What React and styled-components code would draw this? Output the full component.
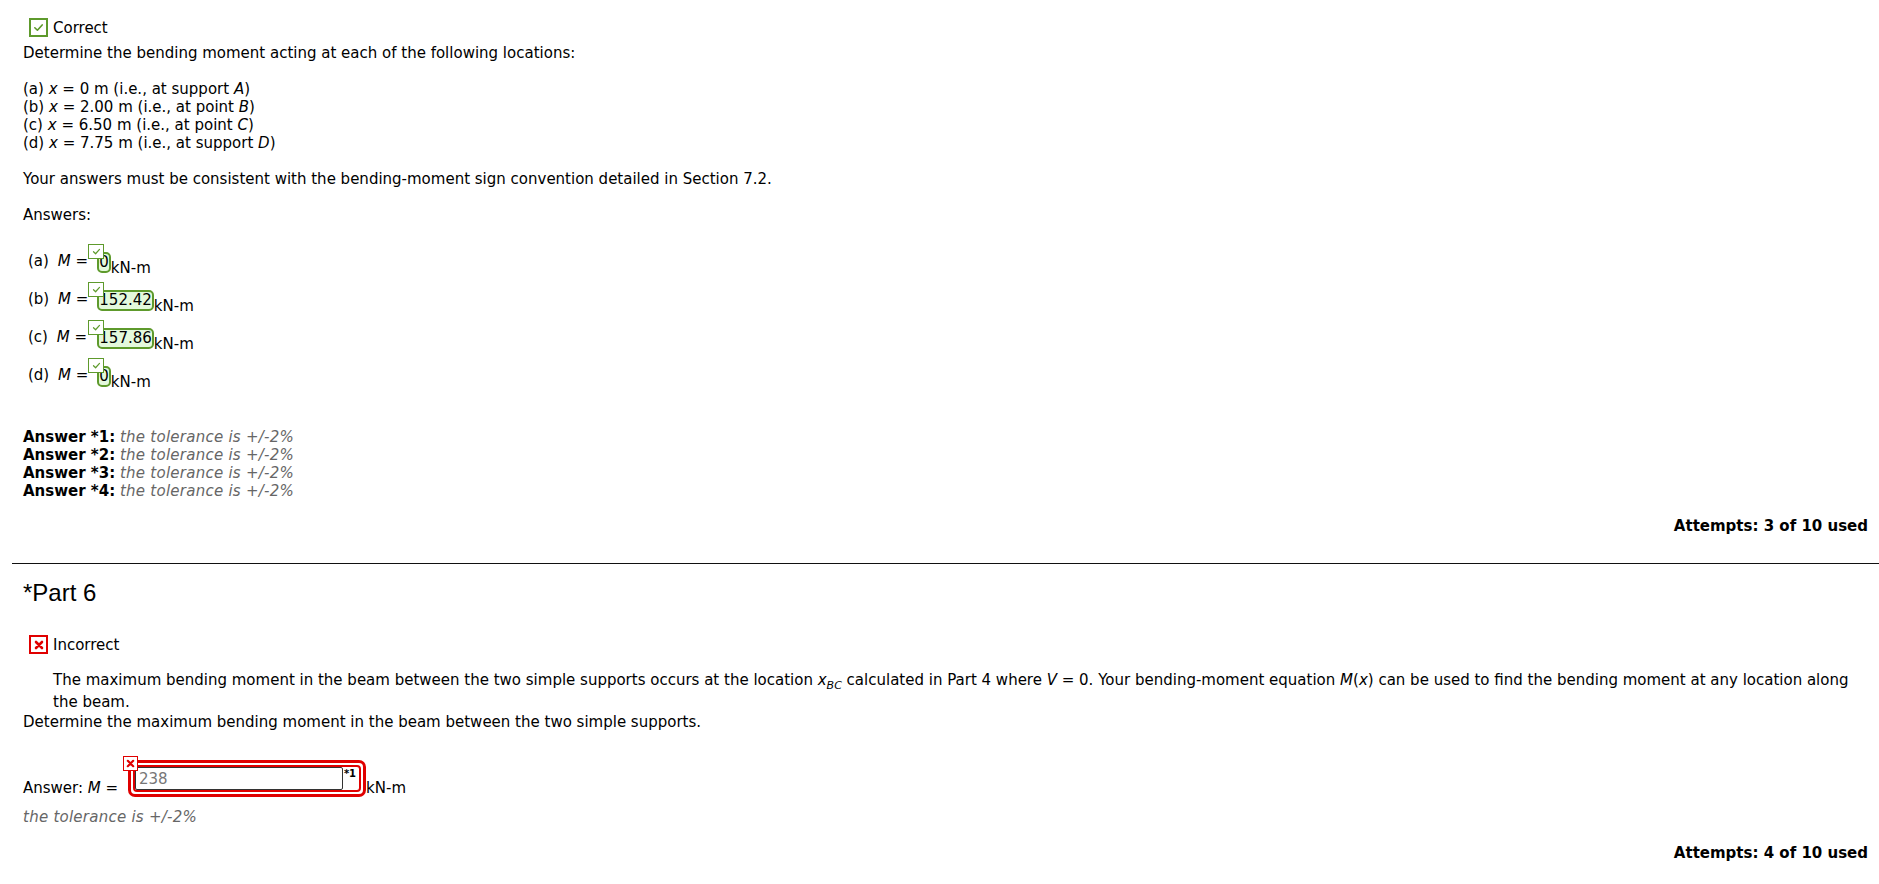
import React from "react";
import styled, { createGlobalStyle } from "styled-components";

const GlobalStyle = createGlobalStyle`
  html, body {
    margin: 0;
    padding: 0;
    background: #fff;
  }
  body {
    font-family: "DejaVu Sans", Verdana, sans-serif;
    font-size: 15px;
    line-height: 18px;
    color: #000;
  }
`;

const GREEN = "#5e9a2c";
const RED = "#e00000";

const Page = styled.div`
  padding: 18px 0 0 12px;
`;

const Section = styled.div`
  padding: 0 11px 0 11px;
`;

const Status = styled.div`
  display: flex;
  align-items: flex-end;
  gap: 5px;
  padding-left: 6px;
  margin-top: ${(p) => p.$top || 0}px;
  margin-bottom: ${(p) => p.$gap || 0}px;
`;

const StatusBox = styled.span`
  width: 19px;
  height: 19px;
  box-sizing: border-box;
  border: 2px solid ${(p) => (p.$bad ? RED : GREEN)};
  background: #fff;
  display: flex;
  align-items: center;
  justify-content: center;
`;

const Question = styled.div``;

const AnswerGrid = styled.div`
  display: grid;
  grid-template-columns: max-content max-content;
  align-items: center;
  row-gap: 5px;
  margin-top: 20px;
  padding-left: 5px;
`;

const RowLabel = styled.div`
  white-space: nowrap;
  & > .tag {
    margin-right: 4px;
  }
`;

const FieldCell = styled.div`
  white-space: nowrap;
`;

const Field = styled.span`
  display: inline-block;
  position: relative;
  overflow: hidden;
  padding: 8px 0 0 9px;
  vertical-align: baseline;
`;

const SmallCheck = styled.span`
  position: absolute;
  left: 0;
  top: 0;
  width: 16px;
  height: 15px;
  box-sizing: border-box;
  border: 1.5px solid ${GREEN};
  background: #fff;
  display: flex;
  align-items: center;
  justify-content: center;
`;

const GoodValue = styled.span`
  display: inline-block;
  height: 21px;
  box-sizing: border-box;
  border: 2px solid ${GREEN};
  border-radius: 5px;
  background: #e4f9dc;
  line-height: 17px;
  padding: 0;
`;

const Notes = styled.div`
  margin-top: 37px;
  & b {
    font-weight: bold;
  }
  & em {
    color: #666;
    letter-spacing: 0.25px;
  }
`;

const Attempts = styled.div`
  text-align: right;
  font-weight: bold;
  margin-top: ${(p) => p.$top}px;
`;

const Rule = styled.hr`
  border: none;
  border-top: 1px solid #111;
  margin: 28px 0 0 0;
  height: 0;
`;

const PartTitle = styled.div`
  font-family: "Liberation Sans", Arial, sans-serif;
  font-size: 24px;
  line-height: 28px;
  margin: 15px 0 0 11px;
`;

const FeedbackBody = styled.div`
  display: flex;
  flex-direction: column;
`;

const StatusText = styled.span``;

const Hint = styled.p`
  margin: 16px 0 0 30px;
  line-height: 21.5px;
  & sub {
    font-size: 11px;
    vertical-align: -4px;
    line-height: 0;
  }
`;

const FinalAnswer = styled.div`
  margin-top: 25px;
  white-space: nowrap;
`;

const RedField = styled.span`
  display: inline-block;
  position: relative;
  padding: 4px 0 0 5px;
  vertical-align: text-bottom;
`;

const XMark = styled.span`
  position: absolute;
  left: 0;
  top: 0;
  width: 15px;
  height: 15px;
  box-sizing: border-box;
  border: 1px solid ${RED};
  background: #fff;
  display: flex;
  align-items: center;
  justify-content: center;
  z-index: 1;
`;

const OuterRing = styled.span`
  display: inline-block;
  border: 3px solid ${RED};
  border-radius: 7px;
  padding: 2px;
  background: #fff;
`;

const InnerRing = styled.span`
  display: flex;
  align-items: flex-start;
  border: 2px solid ${RED};
  border-radius: 4px;
`;

const TextInput = styled.input`
  width: 208px;
  height: 23px;
  box-sizing: border-box;
  border: 1px solid #333;
  border-radius: 2px;
  font-family: "DejaVu Sans", Verdana, sans-serif;
  font-size: 15px;
  color: #777;
  padding: 0 3px;
  margin: 0;
  outline: none;
`;

const Sup = styled.sup`
  font-size: 10px;
  font-weight: bold;
  line-height: 10px;
  vertical-align: top;
  padding: 2px 3px 0 1px;
`;

const Tolerance = styled.div`
  margin-top: 11px;
  font-style: italic;
  color: #666;
  letter-spacing: 0.25px;
`;

const Check = ({ size = 11, width = 1.8 }) => (
  <svg width={size} height={size} viewBox="0 0 12 12">
    <polyline
      points="2,6.3 4.8,9 10,3.2"
      fill="none"
      stroke={GREEN}
      strokeWidth={width}
      strokeLinecap="round"
      strokeLinejoin="round"
    />
  </svg>
);

const Cross = ({ size = 10, width = 2.6 }) => (
  <svg width={size} height={size} viewBox="0 0 10 10">
    <path
      d="M2 2 L8 8 M8 2 L2 8"
      stroke={RED}
      strokeWidth={width}
      strokeLinecap="round"
    />
  </svg>
);

const answers = [
  { tag: "(a)", value: "0" },
  { tag: "(b)", value: "152.42" },
  { tag: "(c)", value: "157.86" },
  { tag: "(d)", value: "0" },
];

export default function App() {
  return (
    <>
      <GlobalStyle />
      <Page>
        <Section>
          <Status $gap={7}>
            <StatusBox>
              <Check />
            </StatusBox>
            <StatusText>Correct</StatusText>
          </Status>
          <Question>
            Determine the bending moment acting at each of the following locations:
            <br />
            <br />
            (a) <i>x</i> = 0 m (i.e., at support <i>A</i>)
            <br />
            (b) <i>x</i> = 2.00 m (i.e., at point <i>B</i>)
            <br />
            (c) <i>x</i> = 6.50 m (i.e., at point <i>C</i>)
            <br />
            (d) <i>x</i> = 7.75 m (i.e., at support <i>D</i>)
            <br />
            <br />
            Your answers must be consistent with the bending-moment sign convention detailed in Section 7.2.
            <br />
            <br />
            Answers:
          </Question>
          <AnswerGrid>
            {answers.map((a) => (
              <React.Fragment key={a.tag}>
                <RowLabel>
                  <span className="tag">{a.tag}</span> <i>M</i> =
                </RowLabel>
                <FieldCell>
                  <Field>
                    <SmallCheck>
                      <Check size={9} width={1.6} />
                    </SmallCheck>
                    <GoodValue>{a.value}</GoodValue>
                  </Field>
                  kN-m
                </FieldCell>
              </React.Fragment>
            ))}
          </AnswerGrid>
          <Notes>
            {[1, 2, 3, 4].map((n) => (
              <div key={n}>
                <b>Answer *{n}:</b> <em>the tolerance is +/-2%</em>
              </div>
            ))}
          </Notes>
          <Attempts $top={17}>Attempts: 3 of 10 used</Attempts>
        </Section>
        <Rule />
        <PartTitle>*Part 6</PartTitle>
        <Section>
          <FeedbackBody>
            <Status $top={28}>
              <StatusBox $bad>
                <Cross />
              </StatusBox>
              <StatusText>Incorrect</StatusText>
            </Status>
            <Hint>
              The maximum bending moment in the beam between the two simple supports occurs at the
              location <i>x</i>
              <sub>
                <i>BC</i>
              </sub>{" "}
              calculated in Part 4 where <i>V</i> = 0. Your bending-moment equation <i>M</i>(<i>x</i>)
              can be used to find the bending moment at any location along the beam.
            </Hint>
          </FeedbackBody>
          <Question>Determine the maximum bending moment in the beam between the two simple supports.</Question>
          <FinalAnswer>
            Answer: <i>M</i> ={" "}
            <RedField>
              <XMark>
                <Cross size={9} width={2.4} />
              </XMark>
              <OuterRing>
                <InnerRing>
                  <TextInput readOnly defaultValue="238" />
                  <Sup>*1</Sup>
                </InnerRing>
              </OuterRing>
            </RedField>
            kN-m
          </FinalAnswer>
          <Tolerance>the tolerance is +/-2%</Tolerance>
          <Attempts $top={18}>Attempts: 4 of 10 used</Attempts>
        </Section>
      </Page>
    </>
  );
}
